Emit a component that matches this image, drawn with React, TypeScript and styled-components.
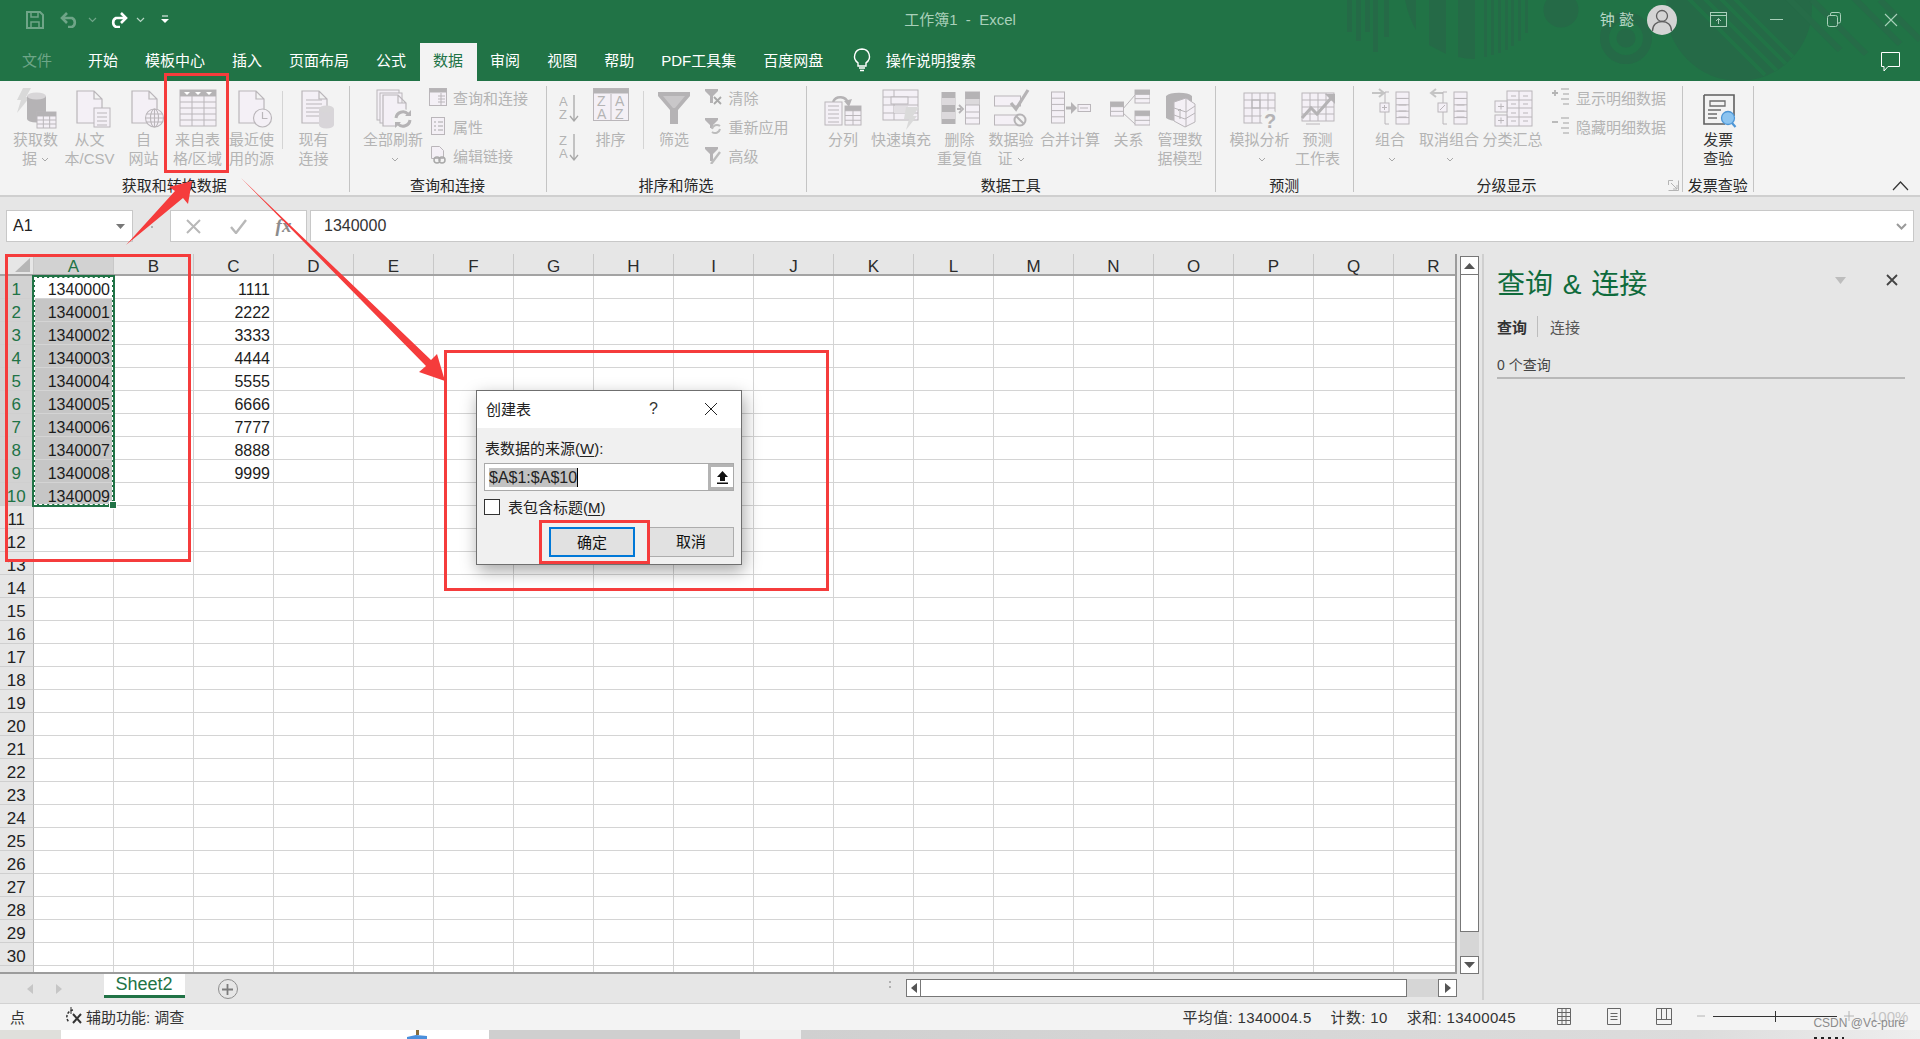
import React from "react";
import styled, { createGlobalStyle } from "styled-components";

const FONT = `"Liberation Sans", "Noto Sans CJK SC", sans-serif`;
const GREEN = "#217346";
const RED = "#f53c3c";
const STROKE = "#bab6ba";
const FILL = "#f4f0f6";
const SOLID = "#b5b3b5";

const GlobalStyle = createGlobalStyle`
  html, body { margin: 0; padding: 0; background: #e6e6e6; }
  * { box-sizing: border-box; }
`;

const Window = styled.div`
  position: relative;
  display: flex;
  flex-direction: column;
  width: 1920px;
  height: 1039px;
  overflow: hidden;
  font-family: ${FONT};
  background: #e6e6e6;
`;

/* ---------- title bar and tabs ---------- */

const Header = styled.header`
  position: relative;
  flex: none;
  height: 81px;
  background: ${GREEN};
  overflow: hidden;
`;

const Pattern = styled.svg`
  position: absolute;
  left: 0;
  top: 0;
`;

const TitleRow = styled.div`
  position: relative;
  display: grid;
  grid-template-columns: 1fr auto 1fr;
  align-items: center;
  height: 43px;
  padding-bottom: 4px;
`;

const QuickAccess = styled.div`
  display: flex;
  align-items: center;
  padding-left: 12px;
`;

const QatSlot = styled.div<{ $w: number }>`
  display: flex;
  justify-content: center;
  align-items: center;
  width: ${({ $w }) => $w}px;
  height: 26px;
`;

const DocTitle = styled.div`
  margin-top: -2px;
  font-size: 15px;
  color: #a9d0ba;
  white-space: pre;
`;

const Account = styled.div`
  display: flex;
  justify-content: flex-end;
  align-items: center;
`;

const UserName = styled.span`
  margin-top: -3px;
  font-size: 15px;
  color: #b8d8c6;
`;

const Avatar = styled.div`
  display: flex;
  justify-content: center;
  align-items: center;
  width: 30px;
  height: 30px;
  margin: 0 13px;
  border-radius: 50%;
  background: #d4d4d4;
`;

const WindowButton = styled.div`
  display: flex;
  justify-content: center;
  align-items: center;
  width: 57.5px;
  height: 30px;
`;

const TabRow = styled.nav`
  position: relative;
  display: flex;
  align-items: stretch;
  height: 38px;
  padding-left: 8.5px;
`;

const Tab = styled.div<{ $active?: boolean; $dim?: boolean }>`
  display: flex;
  align-items: center;
  padding: 0 13.5px 6px;
  margin-right: ${({ $dim }) => ($dim ? 9 : 0)}px;
  font-size: 15px;
  white-space: nowrap;
  color: ${({ $active, $dim }) => ($active ? GREEN : $dim ? "#6ea688" : "#fff")};
  background: ${({ $active }) => ($active ? "#f3f3f3" : "transparent")};
`;

const SearchHint = styled.div`
  display: flex;
  align-items: center;
  gap: 14px;
  margin-left: 15px;
  padding-bottom: 5px;
  font-size: 15px;
  color: #fff;
`;

const CommentButton = styled.div`
  display: flex;
  align-items: center;
  margin-left: auto;
  margin-right: 20px;
`;

/* ---------- ribbon ---------- */

const Ribbon = styled.section`
  display: flex;
  flex: none;
  height: 116px;
  padding: 5px 0 3px;
  background: #f3f3f3;
  border-bottom: 2px solid #cfcfcf;
`;

const Group = styled.div<{ $w: number }>`
  position: relative;
  display: flex;
  flex-direction: column;
  flex: none;
  width: ${({ $w }) => $w}px;
  border-right: 1px solid #c4c4c4;
`;

const GroupBody = styled.div<{ $pad: number }>`
  display: flex;
  align-items: flex-start;
  height: 91px;
  padding-left: ${({ $pad }) => $pad}px;
`;

const GroupLabel = styled.div<{ $pr?: number }>`
  height: 15px;
  padding-right: ${({ $pr }) => $pr ?? 0}px;
  line-height: 18px;
  text-align: center;
  font-size: 15px;
  color: #262626;
  white-space: nowrap;
`;

const LargeButton = styled.div<{ $w: number }>`
  display: flex;
  flex-direction: column;
  align-items: center;
  flex: none;
  width: ${({ $w }) => $w}px;
  padding-top: 2px;
`;

const IconSlot = styled.div`
  display: flex;
  justify-content: center;
  height: 42px;
`;

const ButtonLabel = styled.div<{ $on?: boolean }>`
  width: 100%;
  text-align: center;
  font-size: 15px;
  line-height: 19px;
  white-space: nowrap;
  color: ${({ $on }) => ($on ? "#333" : "#b4b4b4")};
`;

const ThinDivider = styled.div<{ $before: number; $after: number }>`
  flex: none;
  width: 1px;
  height: 58px;
  margin: 5px ${({ $after }) => $after}px 0 ${({ $before }) => $before}px;
  background: #d4d4d4;
`;

const SmallColumn = styled.div<{ $ml?: number }>`
  display: flex;
  flex-direction: column;
  flex: none;
  margin-top: -3.5px;
  margin-left: ${({ $ml }) => $ml ?? 0}px;
`;

const SmallItem = styled.div`
  display: flex;
  align-items: center;
  gap: 6px;
  height: 29px;
  font-size: 15px;
  white-space: nowrap;
  color: #b4b4b4;
`;

const SortColumn = styled.div`
  display: flex;
  flex-direction: column;
  align-items: center;
  flex: none;
  gap: 11px;
  width: 24px;
  padding-top: 8px;
`;

const Launcher = styled.svg`
  position: absolute;
  right: 3px;
  bottom: 1px;
`;

const CollapseButton = styled.div`
  align-self: flex-end;
  margin-left: auto;
  margin-right: 11px;
  margin-bottom: 1px;
  line-height: 0;
`;

const CaretIcon = styled.svg`
  display: inline-block;
  margin-left: 4px;
  vertical-align: 2px;
`;

const Caret = () => (
  <CaretIcon width="8" height="5" viewBox="0 0 8 5">
    <path d="M1 1l3 3 3-3" fill="none" stroke="#a8a8a8" />
  </CaretIcon>
);

/* ---------- formula bar ---------- */

const FormulaBar = styled.section`
  display: flex;
  flex: none;
  align-items: flex-start;
  height: 57px;
  padding: 13px 6px 0;
  background: #e6e6e6;
`;

const NameBox = styled.div`
  display: flex;
  justify-content: space-between;
  align-items: center;
  width: 127px;
  height: 32px;
  padding: 0 7px 0 6px;
  background: #fff;
  border: 1px solid #c8c8c8;
  font-size: 16px;
  color: #222;
`;

const GripDots = styled.div`
  display: flex;
  flex-direction: column;
  gap: 4px;
  align-items: center;
  width: 37px;
  height: 32px;
  padding-top: 10px;

  &::before,
  &::after {
    content: "";
    width: 2px;
    height: 2px;
    background: #b0b0b0;
  }
`;

const FunctionBox = styled.div`
  display: grid;
  grid-template-columns: 45px 45px 1fr;
  justify-items: center;
  align-items: center;
  width: 137px;
  height: 32px;
  background: #fff;
  border: 1px solid #c8c8c8;
`;

const FxLabel = styled.span`
  font-family: "Liberation Serif", serif;
  font-style: italic;
  font-weight: bold;
  font-size: 19px;
  color: #8c8c8c;
`;

const FormulaInput = styled.div`
  display: flex;
  justify-content: space-between;
  align-items: center;
  flex: 1;
  height: 32px;
  margin-left: 3px;
  padding: 0 6px 0 13px;
  background: #fff;
  border: 1px solid #c8c8c8;
  font-size: 16px;
  color: #333;
`;

/* ---------- sheet ---------- */

const Workspace = styled.div`
  display: flex;
  flex: none;
  height: 749px;
`;

const SheetArea = styled.div`
  display: flex;
  flex-direction: column;
  flex: none;
  width: 1482px;
`;

const SheetTop = styled.div`
  display: flex;
  height: 720px;
`;

const GridFrame = styled.div`
  position: relative;
  flex: none;
  width: 1457px;
  height: 720px;
  overflow: hidden;
  background: #fff;
  border-right: 2px solid #9c9c9c;
  border-bottom: 2px solid #9c9c9c;
`;

const HeaderRow = styled.div`
  display: flex;
  height: 22px;
  background: #e6e6e6;
  border-bottom: 2px solid #a3a3a3;
`;

const Corner = styled.div`
  position: relative;
  flex: none;
  width: 33.5px;
  border-right: 1px solid #c8c8c8;

  &::after {
    content: "";
    position: absolute;
    left: 15px;
    top: 4px;
    width: 15px;
    height: 14px;
    background: #b6b6b6;
    clip-path: polygon(100% 0, 100% 100%, 0 100%);
  }
`;

const ColHead = styled.div<{ $on?: boolean }>`
  flex: none;
  width: 80px;
  padding-left: 1px;
  text-align: center;
  font-size: 17px;
  line-height: 26px;
  color: ${({ $on }) => ($on ? GREEN : "#2b2b2b")};
  background: ${({ $on }) => ($on ? "#d2d2d2" : "transparent")};
  border-right: 1px solid #c8c8c8;
`;

const Row = styled.div`
  display: flex;
  height: 23px;
`;

const RowHead = styled.div<{ $on?: boolean }>`
  flex: none;
  width: 33.5px;
  text-align: center;
  font-size: 17px;
  line-height: 28px;
  color: ${({ $on }) => ($on ? GREEN : "#222")};
  background: ${({ $on }) => ($on ? "#d2d2d2" : "#e6e6e6")};
  border-right: 1px solid #b8b8b8;
  border-bottom: 1px solid #cfcfcf;
`;

const Cell = styled.div<{ $shade?: boolean }>`
  flex: none;
  width: 80px;
  padding-right: 2.5px;
  text-align: right;
  font-size: 16px;
  line-height: 27px;
  color: #1c1c1c;
  background: ${({ $shade }) => ($shade ? "#c6c6c6" : "#fff")};
  border-right: 1px solid #d4d4d4;
  border-bottom: 1px solid #d4d4d4;
`;

const Marquee = styled.div`
  position: absolute;
  left: 32px;
  top: 21px;
  width: 83px;
  height: 232px;
  border: 3px solid ${GREEN};

  &::before {
    content: "";
    position: absolute;
    inset: -1px;
    border: 1px dashed #fff;
  }

  &::after {
    content: "";
    position: absolute;
    right: -5px;
    bottom: -5px;
    width: 6px;
    height: 6px;
    background: ${GREEN};
    border: 1px solid #fff;
  }
`;

const ScrollGutter = styled.div`
  display: flex;
  flex-direction: column;
  flex: none;
  width: 25px;
  padding: 2px 3px 0;
`;

const ScrollButton = styled.div<{ $w?: number; $h?: number }>`
  display: flex;
  justify-content: center;
  align-items: center;
  flex: none;
  width: ${({ $w }) => ($w ? `${$w}px` : "100%")};
  height: ${({ $h }) => ($h ? `${$h}px` : "100%")};
  background: #fff;
  border: 1px solid #777;
`;

const VerticalThumb = styled.div`
  flex: none;
  height: 657px;
  background: #fff;
  border: 1px solid #777;
  border-top: 0;
`;

const VerticalTrack = styled.div`
  flex: 1;
  background: #d6d6d6;
`;

const SheetBar = styled.div`
  display: flex;
  align-items: flex-start;
  flex: none;
  height: 29px;
`;

const SheetNav = styled.div`
  display: flex;
  flex: none;
  width: 103.5px;
  height: 25px;
  padding: 10px 0 0 27px;
  gap: 23px;
`;

const SheetTab = styled.div`
  flex: none;
  width: 81px;
  height: 25.5px;
  margin-top: -2px;
  text-align: center;
  font-size: 18px;
  line-height: 24px;
  color: ${GREEN};
  background: #fff;
  border-bottom: 3px solid ${GREEN};
`;

const AddSheet = styled.div`
  display: flex;
  flex: none;
  width: 20px;
  height: 20px;
  margin: 5px 0 0 33px;
  justify-content: center;
  align-items: center;
  border: 1.5px solid #8e8e8e;
  border-radius: 50%;
`;

const SheetGrip = styled(GripDots)`
  flex: none;
  width: 4px;
  height: 18px;
  margin: 4px 14px 0 auto;
  padding-top: 3px;
  gap: 3px;
`;

const HorizontalScroll = styled.div`
  display: flex;
  flex: none;
  width: 551px;
  height: 18px;
  margin: 5px 25px 0 0;
`;

const HorizontalThumb = styled.div`
  flex: none;
  width: 486px;
  background: #fff;
  border: 1px solid #777;
  border-left: 0;
`;

const HorizontalTrack = styled.div`
  flex: 1;
  background: #d6d6d6;
`;

/* ---------- side pane ---------- */

const Pane = styled.aside`
  position: relative;
  display: flex;
  flex-direction: column;
  flex: 1;
  height: 746px;
  padding: 0 15px 0 13px;
  border-left: 2px solid #cfcfcf;
`;

const PaneHead = styled.div`
  display: flex;
  align-items: center;
  height: 55px;
`;

const PaneTitle = styled.h2`
  margin: 0;
  font-size: 28px;
  font-weight: 400;
  word-spacing: 2px;
  color: #0f6b3c;
`;

const PaneTools = styled.div`
  display: flex;
  align-items: center;
  gap: 40px;
  margin-left: auto;
  margin-right: 7px;
  margin-top: -3px;
`;

const PaneTabs = styled.div`
  display: flex;
  align-items: center;
  height: 24px;
  margin-top: 5px;
  font-size: 15px;
  color: #444;
`;

const PaneTab = styled.span<{ $on?: boolean }>`
  padding: 0 ${({ $on }) => ($on ? 10 : 12)}px 0 ${({ $on }) => ($on ? 0 : 12)}px;
  font-weight: ${({ $on }) => ($on ? 600 : 400)};
  border-right: ${({ $on }) => ($on ? "1px solid #bdbdbd" : "0")};
  color: ${({ $on }) => ($on ? "#333" : "#555")};
`;

const PaneCount = styled.div`
  margin-top: 16px;
  padding-bottom: 3px;
  font-size: 14px;
  color: #444;
  border-bottom: 2px solid #b8b8b8;
`;

/* ---------- status bar ---------- */

const StatusBar = styled.footer`
  display: flex;
  align-items: center;
  flex: none;
  height: 27px;
  padding: 0 10px 2px 0;
  font-size: 15px;
  color: #333;
  background: #f3f3f3;
  border-top: 1px solid #d2d2d2;
`;

const StatusMode = styled.span`
  width: 65px;
  padding-left: 10px;
`;

const StatusCheck = styled.div`
  display: flex;
  align-items: center;
  gap: 3px;
`;

const StatsGroup = styled.div`
  display: flex;
  gap: 19px;
  margin-left: auto;
  letter-spacing: 0.35px;
`;

const ViewButtons = styled.div`
  display: flex;
  gap: 30px;
  margin-left: 38px;
`;

const ZoomControl = styled.div`
  display: flex;
  align-items: center;
  margin-left: 23px;
  color: #b4b4b4;
`;

const ZoomTrack = styled.div`
  position: relative;
  width: 124px;
  height: 1px;
  margin: 0 7px 0 8px;
  background: #333;

  &::after {
    content: "";
    position: absolute;
    left: 62px;
    top: -5px;
    width: 1px;
    height: 11px;
    background: #333;
  }
`;

const ZoomValue = styled.span`
  margin-left: 16px;
  width: 40px;
  color: #c4c4c4;
`;

const Desktop = styled.div`
  display: flex;
  flex: none;
  height: 9px;
`;

const DesktopPart = styled.div<{ $w?: number; $bg: string }>`
  position: relative;
  flex: ${({ $w }) => ($w ? "none" : "1")};
  width: ${({ $w }) => ($w ? `${$w}px` : "auto")};
  background: ${({ $bg }) => $bg};
`;

const TrayMark = styled.div`
  position: absolute;
  right: 76px;
  bottom: 0;
  width: 30px;
  height: 2px;
  background: repeating-linear-gradient(90deg, #222 0 3px, transparent 3px 7px);
`;

const TaskIcon = styled.svg`
  position: absolute;
  left: 344px;
  top: 0;
`;

const Watermark = styled.div`
  position: absolute;
  right: 15px;
  bottom: 9px;
  font-size: 12px;
  color: #8b8b8b;
`;

/* ---------- dialog ---------- */

const Dialog = styled.div`
  position: absolute;
  left: 476px;
  top: 390px;
  display: flex;
  flex-direction: column;
  width: 266px;
  height: 175px;
  background: #f0f0f0;
  border: 1px solid #6f6f6f;
  box-shadow: 2px 6px 16px rgba(0, 0, 0, 0.35);
`;

const DialogHead = styled.div`
  display: flex;
  align-items: center;
  flex: none;
  height: 37px;
  padding: 0 0 2px 9px;
  font-size: 15px;
  color: #222;
  background: #fff;
`;

const HelpMark = styled.span`
  margin-left: auto;
  margin-right: 47px;
  font-size: 16px;
  color: #333;
`;

const CloseMark = styled.svg`
  margin-right: 24px;
`;

const DialogBody = styled.div`
  display: flex;
  flex-direction: column;
  padding: 12px 7px 0;
  font-size: 15px;
  color: #222;
`;

const FieldLabel = styled.div`
  height: 23px;
  padding-left: 1px;
  line-height: 18px;
  white-space: nowrap;
`;

const Shortcut = styled.u`
  text-underline-offset: 2px;
`;

const RangeInput = styled.div`
  display: flex;
  align-items: stretch;
  height: 28px;
  background: #fff;
  border: 1px solid #a9a9a9;
`;

const RangeText = styled.div`
  display: flex;
  align-items: center;
  flex: 1;
  padding-left: 4px;
  font-size: 16px;
  color: #222;
`;

const RangeSelected = styled.span`
  height: 19px;
  line-height: 19px;
  background: #c2c2c2;
  border-right: 1px solid #000;
`;

const RangePicker = styled.div`
  display: flex;
  justify-content: center;
  align-items: center;
  flex: none;
  width: 25px;
  background: #fff;
  border: 3px solid #b4b4b4;
  border-width: 3px 0 3px 3px;
`;

const CheckRow = styled.div`
  display: flex;
  align-items: center;
  gap: 8px;
  height: 16px;
  margin-top: 8px;
`;

const CheckBox = styled.div`
  flex: none;
  width: 16px;
  height: 16px;
  background: #fff;
  border: 1px solid #333;
`;

const CheckText = styled.span`
  margin-top: -2px;
`;

const DialogButtons = styled.div`
  display: flex;
  justify-content: flex-end;
  gap: 13px;
  margin-top: 12px;
`;

const DialogButton = styled.div<{ $primary?: boolean }>`
  width: 86px;
  height: 30px;
  text-align: center;
  line-height: 28px;
  font-size: 15px;
  color: #111;
  background: #e1e1e1;
  border: ${({ $primary }) => ($primary ? "2px solid #0078d7" : "1px solid #adadad")};
`;

/* ---------- red annotations drawn over the screenshot ---------- */

const RedBox = styled.div<{ $x: number; $y: number; $w: number; $h: number }>`
  position: absolute;
  left: ${({ $x }) => $x}px;
  top: ${({ $y }) => $y}px;
  width: ${({ $w }) => $w}px;
  height: ${({ $h }) => $h}px;
  border: 3px solid ${RED};
  pointer-events: none;
`;

const ArrowLayer = styled.svg`
  position: absolute;
  left: 0;
  top: 0;
  pointer-events: none;
`;

/* ---------- icons ---------- */

const Doc = ({ x, y, w, h }: { x: number; y: number; w: number; h: number }) => (
  <path
    d={`M${x} ${y}h${w - 8}l8 8v${h - 8}h-${w}z M${x + w - 8} ${y}v8h8`}
    fill={FILL}
    stroke={STROKE}
    strokeWidth="1.2"
  />
);

const Lines = ({ x, y, w, n, gap = 4 }: { x: number; y: number; w: number; n: number; gap?: number }) => (
  <path
    d={Array.from({ length: n }, (_, i) => `M${x} ${y + i * gap}h${w}`).join("")}
    stroke={STROKE}
    strokeWidth="1"
    fill="none"
  />
);

const Table = ({ x, y, w, h, cols, rows, head = true }: { x: number; y: number; w: number; h: number; cols: number; rows: number; head?: boolean }) => {
  const parts: string[] = [];
  for (let i = 1; i < cols; i++) parts.push(`M${x + (w * i) / cols} ${y}v${h}`);
  for (let i = 1; i < rows; i++) parts.push(`M${x} ${y + (h * i) / rows}h${w}`);
  return (
    <g>
      <rect x={x} y={y} width={w} height={h} fill={FILL} stroke={STROKE} />
      <path d={parts.join("")} stroke={STROKE} fill="none" />
      {head && <rect x={x} y={y} width={w} height={h / rows} fill={SOLID} />}
    </g>
  );
};

const Large = ({ children }: { children: React.ReactNode }) => (
  <svg width="42" height="42" viewBox="0 0 42 42">
    {children}
  </svg>
);

const Small = ({ children }: { children: React.ReactNode }) => (
  <svg width="18" height="18" viewBox="0 0 18 18" style={{ flex: "none" }}>
    {children}
  </svg>
);

const Cylinder = ({ x, y, w, h, fill }: { x: number; y: number; w: number; h: number; fill: string }) => (
  <g>
    <path d={`M${x} ${y + 3}v${h - 6}a${w / 2} 3.5 0 0 0 ${w} 0v-${h - 6}z`} fill={fill} />
    <ellipse cx={x + w / 2} cy={y + 3} rx={w / 2} ry="3.5" fill="#d8d6d8" />
  </g>
);

const GetDataIcon = () => (
  <Large>
    <path d="M8 0h8l-5 9h4L2 25l4-13H2z" fill="#d9d9d9" />
    <Cylinder x={12} y={5} w={19} h={29} fill={SOLID} />
    <rect x={22} y={24} width={19} height={16} fill="#fff" />
    <Table x={22} y={24} w={19} h={16} cols={3} rows={4} />
  </Large>
);

const FromTextIcon = () => (
  <Large>
    <Doc x={8} y={3} w={25} h={32} />
    <rect x={25} y={20} width={16} height={19} fill={FILL} stroke={STROKE} />
    <Lines x={28} y={25} w={10} n={4} />
  </Large>
);

const Globe = ({ cx, cy }: { cx: number; cy: number }) => (
  <g fill={FILL} stroke={STROKE} strokeWidth="1.1">
    <circle cx={cx} cy={cy} r="9" />
    <ellipse cx={cx} cy={cy} rx="4" ry="9" fill="none" />
    <path d={`M${cx - 9} ${cy}h18M${cx - 8} ${cy - 4}h16M${cx - 8} ${cy + 4}h16M${cx} ${cy - 9}v18`} fill="none" />
  </g>
);

const FromWebIcon = () => (
  <Large>
    <Doc x={9} y={3} w={25} h={32} />
    <Globe cx={31.5} cy={30} />
  </Large>
);

const FromTableIcon = () => (
  <Large>
    <Table x={3} y={2} w={36} h={36} cols={3} rows={6} />
    <path d="M7 4h6l-3 3zM18 4h6l-3 3zM29 4h6l-3 3z" fill="#fff" />
  </Large>
);

const RecentIcon = () => (
  <Large>
    <Doc x={8} y={3} w={25} h={32} />
    <circle cx="31.5" cy="30" r="9" fill={FILL} stroke={STROKE} strokeWidth="1.2" />
    <path d="M31.5 24v6.5h5" fill="none" stroke={STROKE} strokeWidth="1.2" />
  </Large>
);

const ExistingIcon = () => (
  <Large>
    <Doc x={9} y={3} w={25} h={32} />
    <Lines x={13} y={12} w={16} n={5} />
    <Cylinder x={26} y={18} w={15} h={22} fill="#d8d5d9" />
  </Large>
);

const RefreshRing = ({ cx, cy }: { cx: number; cy: number }) => (
  <g fill="none" stroke={SOLID} strokeWidth="3">
    <path d={`M${cx - 7} ${cy - 1}a7 7 0 0 1 12-4`} />
    <path d={`M${cx + 7} ${cy + 1}a7 7 0 0 1-12 4`} />
    <path d={`M${cx + 8} ${cy - 9}v6h-6zM${cx - 8} ${cy + 9}v-6h6z`} fill={SOLID} stroke="none" />
  </g>
);

const RefreshAllIcon = () => (
  <Large>
    <rect x="5" y="2" width="22" height="30" fill={FILL} stroke={STROKE} />
    <rect x="8" y="5" width="22" height="30" fill={FILL} stroke={STROKE} />
    <Doc x={11} y={7} w={23} h={31} />
    <circle cx="31" cy="31" r="10" fill="#f3f3f3" />
    <RefreshRing cx={31} cy={31} />
  </Large>
);

const SortIcon = ({ top, bottom }: { top: string; bottom: string }) => (
  <svg width="24" height="28" viewBox="0 0 24 28">
    <text x="0" y="12" fontFamily="Liberation Sans" fontSize="13" fill="#b4b4b4">{top}</text>
    <text x="0" y="25" fontFamily="Liberation Sans" fontSize="13" fill="#b4b4b4">{bottom}</text>
    <path d="M15 1v25M11 22l4 5 4-5" fill="none" stroke="#a8a8a8" strokeWidth="1.3" />
  </svg>
);

const SortDialogIcon = () => (
  <svg width="36" height="34" viewBox="0 0 36 34">
    <rect x="0.5" y="0.5" width="35" height="32" fill={FILL} stroke={STROKE} />
    <rect x="0.5" y="0.5" width="35" height="5" fill={SOLID} />
    <path d="M18 6v27" stroke={STROKE} />
    <g fontFamily="Liberation Sans" fontSize="14" fill="#b4b4b4">
      <text x="4" y="18">Z</text>
      <text x="4" y="31">A</text>
      <text x="22" y="18">A</text>
      <text x="22" y="31">Z</text>
    </g>
  </svg>
);

const FilterIcon = () => (
  <Large>
    <path d="M5 4h32v4L25 22v14h-8V22L5 8z" fill={SOLID} />
    <path d="M10 8h22L22 20h-2z" fill="#c9c7c9" />
  </Large>
);

const FilterClearIcon = () => (
  <Small>
    <path d="M0 1h13v2L8 8v7H5V8L0 3z" fill={SOLID} />
    <path d="M9 9l7 7M16 9l-7 7" stroke="#a9a9a9" strokeWidth="1.8" />
  </Small>
);

const FilterReapplyIcon = () => (
  <Small>
    <path d="M0 1h13v2L8 8v3H5V8L0 3z" fill={SOLID} />
    <path d="M7 12a5 5 0 0 1 8-3M15 12a5 5 0 0 1-8 3" fill="none" stroke="#bcbcbc" strokeWidth="2" />
  </Small>
);

const FilterAdvancedIcon = () => (
  <Small>
    <path d="M0 1h13v2L8 8v7H5V8L0 3z" fill={SOLID} />
    <path d="M15 6L6 18" stroke="#bcbcbc" strokeWidth="2.4" />
  </Small>
);

const QueryListIcon = () => (
  <Small>
    <rect x="0.5" y="0.5" width="17" height="17" fill={FILL} stroke={STROKE} />
    <rect x="0.5" y="0.5" width="17" height="4" fill={SOLID} />
    <path d="M9 8h7M9 11h7M9 14h7M12 5v12" stroke={STROKE} />
  </Small>
);

const PropertiesIcon = () => (
  <Small>
    <rect x="2.5" y="0.5" width="13" height="17" fill={FILL} stroke={STROKE} />
    <path d="M5 5h2M9 5h5M5 9h2M9 9h5M5 13h2M9 13h5" stroke="#a8a8a8" />
  </Small>
);

const EditLinksIcon = () => (
  <Small>
    <path d="M2.5.5h8l4 4v8h-12z" fill={FILL} stroke={STROKE} />
    <path d="M5 14a3 3 0 0 1 6 0M10 14a3 3 0 0 0 6 0M5 14a3 3 0 0 0 6 0M10 14a3 3 0 0 1 6 0" fill="none" stroke="#a9a9a9" strokeWidth="1.5" />
  </Small>
);

const TextToColumnsIcon = () => (
  <Large>
    <path d="M11 14a8 8 0 0 1 15 1" fill="none" stroke={SOLID} strokeWidth="2.4" />
    <path d="M30 11l-3 8-5-6z" fill={SOLID} />
    <rect x="3" y="14" width="17" height="23" fill={FILL} stroke={STROKE} />
    <Lines x={6} y={18} w={11} n={5} />
    <Table x={23} y={18} w={16} h={19} cols={2} rows={4} />
  </Large>
);

const FlashFillIcon = () => (
  <Large>
    <rect x="3" y="2" width="35" height="30" fill={FILL} stroke={STROKE} />
    <path d="M3 9h35M3 17h35M3 25h35M14 2v30" stroke={STROKE} />
    <rect x="11" y="9" width="17" height="7" fill={FILL} stroke={STROKE} />
    <rect x="14" y="18" width="14" height="7" fill="#e2dfe3" />
    <path d="M26 19h13l-6 9h4L26 42l3-11h-5z" fill="#dadada" />
  </Large>
);

const RemoveDupIcon = () => (
  <Large>
    <rect x="2.5" y="4" width="14" height="32" fill={SOLID} />
    <rect x="2.5" y="10" width="14" height="7" fill="#dcd9dc" />
    <rect x="2.5" y="24" width="14" height="7" fill="#dcd9dc" />
    <rect x="26.5" y="4" width="14" height="32" fill={FILL} stroke={STROKE} />
    <rect x="26.5" y="4" width="14" height="7" fill={SOLID} />
    <rect x="26.5" y="11" width="14" height="6" fill="#dcd9dc" />
    <path d="M26.5 17h14M26.5 24h14M26.5 30h14" stroke={STROKE} />
    <path d="M18 21h4M20 17l4 4-4 4" fill="none" stroke={SOLID} strokeWidth="1.8" />
  </Large>
);

const ValidateIcon = () => (
  <Large>
    <rect x="4.5" y="8" width="26" height="10" fill={FILL} stroke={STROKE} />
    <rect x="4.5" y="27" width="26" height="10" fill={FILL} stroke={STROKE} />
    <path d="M21 15l5 6L38 2" fill="none" stroke={SOLID} strokeWidth="3.2" />
    <circle cx="30" cy="32" r="5.5" fill="#f3f3f3" stroke={SOLID} strokeWidth="2" />
    <path d="M26 28l8 8" stroke={SOLID} strokeWidth="2" />
  </Large>
);

const ConsolidateIcon = () => (
  <Large>
    <Table x={2.5} y={4} w={13} h={31} cols={1} rows={5} head={false} />
    <path d="M17 20h6" stroke={SOLID} strokeWidth="3" />
    <path d="M22 14l6 6-6 6z" fill={SOLID} />
    <rect x="29" y="16.5" width="12.5" height="7" fill={FILL} stroke={STROKE} />
    <path d="M31 20h8" stroke={STROKE} />
  </Large>
);

const RelationsIcon = () => (
  <Large>
    <path d="M14 22L27 7M14 24l13 12" stroke={STROKE} fill="none" />
    <Table x={2.5} y={14} w={13} h={14} cols={1} rows={3} />
    <Table x={27} y={2} w={15} h={13} cols={1} rows={3} />
    <Table x={27} y={23} w={15} h={14} cols={1} rows={3} />
  </Large>
);

const DataModelIcon = () => (
  <Large>
    <path d="M7 8a14 5 0 0 1 26 0v22a14 5 0 0 1-26 0z" fill={SOLID} />
    <path d="M15 14l12-4 9 6v18l-10 5-11-6z" fill={FILL} stroke={STROKE} />
    <path d="M27 10v29M15 20l12 4 9-6M15 27l11 4 10-6" fill="none" stroke={STROKE} />
    <path d="M21 31v-10l-2 2M21 21l2 2" stroke={SOLID} fill="none" />
  </Large>
);

const WhatIfIcon = () => (
  <Large>
    <rect x="5" y="5" width="31" height="30" fill={FILL} stroke={STROKE} />
    <path d="M5 12h31M5 20h31M5 28h31M13 5v30M21 5v30M29 5v30" stroke={STROKE} />
    <rect x="13" y="12" width="8" height="8" fill="none" stroke={SOLID} />
    <circle cx="31" cy="31" r="9" fill="#f3f3f3" />
    <text x="25" y="40" fontFamily="Liberation Sans" fontWeight="bold" fontSize="20" fill={SOLID}>?</text>
  </Large>
);

const ForecastIcon = () => (
  <Large>
    <rect x="5" y="5" width="32" height="28" fill={FILL} stroke={STROKE} />
    <path d="M5 12h32M5 19h32M5 26h32M13 5v28M21 5v28M29 5v28" stroke={STROKE} />
    <path d="M5 30l9-10 6 6 15-17" fill="none" stroke={SOLID} strokeWidth="3" />
    <path d="M28 6h10v10z" fill={SOLID} />
    <path d="M9 36h14" stroke={STROKE} />
  </Large>
);

const OutlineColumn = () => (
  <g>
    <Table x={27} y={4} w={13} h={32} cols={1} rows={5} head={false} />
    <path d="M29.5 10.5h8M29.5 17h8M29.5 23h8M29.5 29h8" stroke={STROKE} />
    <path d="M20 4h-4v32h4" fill="none" stroke={STROKE} />
    <rect x="11" y="15" width="9" height="9" fill={FILL} stroke={STROKE} />
  </g>
);

const GroupIcon = () => (
  <Large>
    <path d="M3 5h11M10 1l5 4-5 4" fill="none" stroke="#c4c4c4" strokeWidth="2" />
    <OutlineColumn />
    <path d="M13 19.5h5M15.5 17v5" stroke={STROKE} />
  </Large>
);

const UngroupIcon = () => (
  <Large>
    <path d="M16 5H5M9 1L4 5l5 4" fill="none" stroke="#c4c4c4" strokeWidth="2" />
    <OutlineColumn />
    <path d="M13 22l5-5" stroke={STROKE} />
  </Large>
);

const SubtotalIcon = () => (
  <Large>
    <rect x="15" y="3" width="25" height="35" fill={FILL} stroke={STROKE} />
    <path d="M15 12h25M15 20h25M15 29h25M27 3v35" stroke={STROKE} />
    <path d="M19 8h5M31 8h5M19 16h5M31 16h5M19 25h5M31 25h5M19 33h5M31 33h5" stroke={STROKE} />
    <rect x="3" y="13" width="12" height="11" fill={FILL} stroke={STROKE} />
    <rect x="3" y="27" width="12" height="11" fill={FILL} stroke={STROKE} />
    <path d="M6 18.5h6M9 15.5v6M6 32.5h6M9 29.5v6" stroke={STROKE} />
  </Large>
);

const ShowDetailIcon = () => (
  <Small>
    <path d="M0 5h6M3 2v6" stroke="#b4b4b4" strokeWidth="1.8" />
    <path d="M9 1h8M11 6h6M9 11h8M11 16h6" stroke="#bdbdbd" strokeWidth="1.3" />
  </Small>
);

const HideDetailIcon = () => (
  <Small>
    <path d="M0 5h6" stroke="#b4b4b4" strokeWidth="1.8" />
    <path d="M9 1h8M11 6h6M9 11h8M11 16h6" stroke="#bdbdbd" strokeWidth="1.3" />
  </Small>
);

const InvoiceIcon = () => (
  <Large>
    <path d="M7 7h30v21M7 7v29h21" fill="none" stroke="#5f5f5f" strokeWidth="1.6" />
    <path d="M13 13h15v5H13z" fill="none" stroke="#6d6d6d" strokeWidth="1.3" />
    <path d="M11 22h13M11 26h9M11 30h9" stroke="#6d6d6d" strokeWidth="1.3" />
    <circle cx="31" cy="30" r="6.5" fill="#8cc4f0" stroke="#4d96d6" strokeWidth="1.3" />
    <path d="M35 35l3.5 4" stroke="#4d96d6" strokeWidth="2.2" />
  </Large>
);

const Chevron = ({ color }: { color: string }) => (
  <svg width="9" height="6" viewBox="0 0 9 6">
    <path d="M1 1l3.5 3.5L8 1" fill="none" stroke={color} strokeWidth="1.2" />
  </svg>
);

const TitlePattern = () => (
  <Pattern width="1920" height="81" viewBox="0 0 1920 81">
    <defs>
      <clipPath id="bigDisc">
        <circle cx="1739" cy="8" r="73" />
      </clipPath>
    </defs>
    <g fill="#256a47">
      <rect x="1347" y="0" width="5" height="32" />
      <rect x="1356" y="0" width="5" height="41" />
      <rect x="1365" y="0" width="5" height="32" />
      <rect x="1373" y="0" width="5" height="52" />
      <rect x="1384" y="0" width="5" height="37" />
      <path d="M1405 0h11v30q-7-12-11-30z" />
      <path d="M1429 0h17v54l-17-9z" />
      <path d="M1458 0h17v59q-9 0-17-2z" />
      <rect x="1484" y="0" width="3" height="57" />
      <rect x="1491" y="0" width="3" height="55" />
      <rect x="1498" y="0" width="3" height="53" />
      <rect x="1505" y="0" width="3" height="50" />
      <rect x="1511" y="0" width="3" height="46" />
      <rect x="1518" y="0" width="3" height="41" />
      <rect x="1525" y="0" width="3" height="33" />
      <circle cx="1561" cy="10" r="17.5" />
      <circle cx="1626" cy="38" r="9.5" />
      <circle cx="1626" cy="38" r="21.5" fill="none" stroke="#256a47" strokeWidth="9" />
      <circle cx="1739" cy="8" r="73" />
    </g>
    <g clipPath="url(#bigDisc)" stroke={GREEN} strokeWidth="4" fill="none">
      <path d="M1680 -10l85 85M1692 -14l85 85M1704 -18l85 85M1716 -20l80 80" />
    </g>
    <path d="M1780 -10l60 60M1812 0l54 54M1850 -6l50 50M1880 0l40 40" stroke="#266c48" strokeWidth="6" fill="none" />
  </Pattern>
);

/* ---------- data ---------- */

const COLUMNS = "ABCDEFGHIJKLMNOPQR".split("");
const ROW_NUMBERS = Array.from({ length: 31 }, (_, i) => i + 1);
const COL_C = ["1111", "2222", "3333", "4444", "5555", "6666", "7777", "8888", "9999"];
const tabs = ["开始", "模板中心", "插入", "页面布局", "公式"];
const tabsAfter = ["审阅", "视图", "帮助", "PDF工具集", "百度网盘"];

const cellText = (row: number, col: number) => {
  if (col === 0 && row <= 10) return String(1340000 + row - 1);
  if (col === 2 && row <= 9) return COL_C[row - 1];
  return "";
};

export default function App() {
  return (
    <Window>
      <GlobalStyle />

      <Header>
        <TitlePattern />
        <TitleRow>
          <QuickAccess>
            <QatSlot $w={46}>
              <svg width="18" height="18" viewBox="0 0 18 18">
                <path d="M1 1h13l3 3v13H1z" fill="none" stroke="#6fa588" strokeWidth="2" />
                <path d="M5 1v5h7V1M5 17v-6h8v6" fill="none" stroke="#6fa588" strokeWidth="1.5" />
              </svg>
            </QatSlot>
            <QatSlot $w={23}>
              <svg width="20" height="17" viewBox="0 0 20 17">
                <path d="M3 7h9a5 5 0 0 1 0 9H8" fill="none" stroke="#6fa588" strokeWidth="2.6" />
                <path d="M7 2L2 7l5 5" fill="none" stroke="#6fa588" strokeWidth="2.6" />
              </svg>
            </QatSlot>
            <QatSlot $w={22}>
              <Chevron color="#6fa588" />
            </QatSlot>
            <QatSlot $w={29}>
              <svg width="20" height="17" viewBox="0 0 20 17">
                <path d="M17 7H8a5 5 0 0 0 0 9h4" fill="none" stroke="#fff" strokeWidth="2.6" />
                <path d="M13 2l5 5-5 5" fill="none" stroke="#fff" strokeWidth="2.6" />
              </svg>
            </QatSlot>
            <QatSlot $w={16}>
              <Chevron color="#b6d6c4" />
            </QatSlot>
            <QatSlot $w={34}>
              <svg width="8" height="9" viewBox="0 0 8 9">
                <path d="M1 1h6" stroke="#fff" />
                <path d="M0 4h8L4 8z" fill="#fff" />
              </svg>
            </QatSlot>
          </QuickAccess>
          <DocTitle>工作簿1  -  Excel</DocTitle>
          <Account>
            <UserName>钟 懿</UserName>
            <Avatar>
              <svg width="24" height="24" viewBox="0 0 24 24">
                <circle cx="12" cy="8" r="5.5" fill="none" stroke="#5f5f5f" strokeWidth="1.3" />
                <path d="M2.5 23c0-6 4-9.5 9.5-9.5s9.5 3.5 9.5 9.5" fill="none" stroke="#5f5f5f" strokeWidth="1.3" />
              </svg>
            </Avatar>
            <WindowButton>
              <svg width="17" height="15" viewBox="0 0 17 15">
                <rect x="0.5" y="0.5" width="16" height="14" fill="none" stroke="#a9d0ba" />
                <path d="M1 3.5h15" stroke="#a9d0ba" />
                <path d="M8.5 12V6.5M6 9l2.5-2.5L11 9" fill="none" stroke="#a9d0ba" />
              </svg>
            </WindowButton>
            <WindowButton>
              <svg width="13" height="3" viewBox="0 0 13 3">
                <path d="M0 1.5h13" stroke="#a9d0ba" />
              </svg>
            </WindowButton>
            <WindowButton>
              <svg width="14" height="15" viewBox="0 0 14 15">
                <rect x="0.5" y="3.5" width="10" height="11" rx="2" fill="none" stroke="#a9d0ba" />
                <path d="M3.5 3V2a1.5 1.5 0 0 1 1.5-1.5h6A2 2 0 0 1 13.5 2.500v7A1.500 1.500 0 0 1 12 11h-1" fill="none" stroke="#a9d0ba" />
              </svg>
            </WindowButton>
            <WindowButton>
              <svg width="14" height="14" viewBox="0 0 14 14">
                <path d="M1 1l12 12M13 1L1 13" stroke="#a9d0ba" strokeWidth="1.1" />
              </svg>
            </WindowButton>
          </Account>
        </TitleRow>
        <TabRow>
          <Tab $dim>文件</Tab>
          {tabs.map((t) => (
            <Tab key={t}>{t}</Tab>
          ))}
          <Tab $active>数据</Tab>
          {tabsAfter.map((t) => (
            <Tab key={t}>{t}</Tab>
          ))}
          <SearchHint>
            <svg width="20" height="24" viewBox="0 0 20 24">
              <path d="M10 1a7.500 7.500 0 0 0-4 13.800V18h8v-3.200A7.500 7.500 0 0 0 10 1z" fill="none" stroke="#fff" strokeWidth="1.4" />
              <path d="M7 20h6M8 22.500h4" stroke="#fff" strokeWidth="1.5" />
            </svg>
            操作说明搜索
          </SearchHint>
          <CommentButton>
            <svg width="19" height="20" viewBox="0 0 19 20">
              <path d="M.5.5h18v14H7l-4 4.500V14.500H.5z" fill="none" stroke="#fff" />
            </svg>
          </CommentButton>
        </TabRow>
      </Header>

      <Ribbon>
        <Group $w={349.5}>
          <GroupBody $pad={8.5}>
            <LargeButton $w={54}>
              <IconSlot><GetDataIcon /></IconSlot>
              <ButtonLabel>获取数<br />据<Caret /></ButtonLabel>
            </LargeButton>
            <LargeButton $w={54}>
              <IconSlot><FromTextIcon /></IconSlot>
              <ButtonLabel>从文<br />本/CSV</ButtonLabel>
            </LargeButton>
            <LargeButton $w={54}>
              <IconSlot><FromWebIcon /></IconSlot>
              <ButtonLabel>自<br />网站</ButtonLabel>
            </LargeButton>
            <LargeButton $w={54}>
              <IconSlot><FromTableIcon /></IconSlot>
              <ButtonLabel>来自表<br />格/区域</ButtonLabel>
            </LargeButton>
            <LargeButton $w={54}>
              <IconSlot><RecentIcon /></IconSlot>
              <ButtonLabel>最近使<br />用的源</ButtonLabel>
            </LargeButton>
            <ThinDivider $before={3.5} $after={3.5} />
            <LargeButton $w={54}>
              <IconSlot><ExistingIcon /></IconSlot>
              <ButtonLabel>现有<br />连接</ButtonLabel>
            </LargeButton>
          </GroupBody>
          <GroupLabel>获取和转换数据</GroupLabel>
        </Group>

        <Group $w={197}>
          <GroupBody $pad={7.5}>
            <LargeButton $w={72}>
              <IconSlot><RefreshAllIcon /></IconSlot>
              <ButtonLabel>全部刷新<br /><Caret /></ButtonLabel>
            </LargeButton>
            <SmallColumn>
              <SmallItem><QueryListIcon />查询和连接</SmallItem>
              <SmallItem><PropertiesIcon />属性</SmallItem>
              <SmallItem><EditLinksIcon />编辑链接</SmallItem>
            </SmallColumn>
          </GroupBody>
          <GroupLabel>查询和连接</GroupLabel>
        </Group>

        <Group $w={260}>
          <GroupBody $pad={12.5}>
            <SortColumn>
              <SortIcon top="A" bottom="Z" />
              <SortIcon top="Z" bottom="A" />
            </SortColumn>
            <LargeButton $w={55}>
              <IconSlot><SortDialogIcon /></IconSlot>
              <ButtonLabel>排序</ButtonLabel>
            </LargeButton>
            <ThinDivider $before={4.5} $after={0} />
            <LargeButton $w={61}>
              <IconSlot><FilterIcon /></IconSlot>
              <ButtonLabel>筛选</ButtonLabel>
            </LargeButton>
            <SmallColumn>
              <SmallItem><FilterClearIcon />清除</SmallItem>
              <SmallItem><FilterReapplyIcon />重新应用</SmallItem>
              <SmallItem><FilterAdvancedIcon />高级</SmallItem>
            </SmallColumn>
          </GroupBody>
          <GroupLabel>排序和筛选</GroupLabel>
        </Group>

        <Group $w={409.5}>
          <GroupBody $pad={8.5}>
            <LargeButton $w={56}>
              <IconSlot><TextToColumnsIcon /></IconSlot>
              <ButtonLabel>分列</ButtonLabel>
            </LargeButton>
            <LargeButton $w={60}>
              <IconSlot><FlashFillIcon /></IconSlot>
              <ButtonLabel>快速填充</ButtonLabel>
            </LargeButton>
            <LargeButton $w={57}>
              <IconSlot><RemoveDupIcon /></IconSlot>
              <ButtonLabel>删除<br />重复值</ButtonLabel>
            </LargeButton>
            <LargeButton $w={46}>
              <IconSlot><ValidateIcon /></IconSlot>
              <ButtonLabel>数据验<br />证<Caret /></ButtonLabel>
            </LargeButton>
            <LargeButton $w={72}>
              <IconSlot><ConsolidateIcon /></IconSlot>
              <ButtonLabel>合并计算</ButtonLabel>
            </LargeButton>
            <LargeButton $w={45}>
              <IconSlot><RelationsIcon /></IconSlot>
              <ButtonLabel>关系</ButtonLabel>
            </LargeButton>
            <LargeButton $w={58}>
              <IconSlot><DataModelIcon /></IconSlot>
              <ButtonLabel>管理数<br />据模型</ButtonLabel>
            </LargeButton>
          </GroupBody>
          <GroupLabel>数据工具</GroupLabel>
        </Group>

        <Group $w={137.5}>
          <GroupBody $pad={8}>
            <LargeButton $w={71}>
              <IconSlot><WhatIfIcon /></IconSlot>
              <ButtonLabel>模拟分析<br /><Caret /></ButtonLabel>
            </LargeButton>
            <LargeButton $w={45}>
              <IconSlot><ForecastIcon /></IconSlot>
              <ButtonLabel>预测<br />工作表</ButtonLabel>
            </LargeButton>
          </GroupBody>
          <GroupLabel>预测</GroupLabel>
        </Group>

        <Group $w={329}>
          <GroupBody $pad={7.5}>
            <LargeButton $w={58}>
              <IconSlot><GroupIcon /></IconSlot>
              <ButtonLabel>组合<br /><Caret /></ButtonLabel>
            </LargeButton>
            <LargeButton $w={58}>
              <IconSlot><UngroupIcon /></IconSlot>
              <ButtonLabel>取消组合<br /><Caret /></ButtonLabel>
            </LargeButton>
            <LargeButton $w={71}>
              <IconSlot><SubtotalIcon /></IconSlot>
              <ButtonLabel>分类汇总</ButtonLabel>
            </LargeButton>
            <SmallColumn $ml={4}>
              <SmallItem><ShowDetailIcon />显示明细数据</SmallItem>
              <SmallItem><HideDetailIcon />隐藏明细数据</SmallItem>
            </SmallColumn>
          </GroupBody>
          <GroupLabel $pr={22}>分级显示</GroupLabel>
          <Launcher width="11" height="11" viewBox="0 0 11 11">
            <path d="M.5 5V.5H5M3 3l6 6M5 9h4V5M.5 10.500h10V.5" fill="none" stroke="#b4b4b4" />
          </Launcher>
        </Group>

        <Group $w={71.5}>
          <GroupBody $pad={0}>
            <LargeButton $w={71.5}>
              <IconSlot><InvoiceIcon /></IconSlot>
              <ButtonLabel $on>发票<br />查验</ButtonLabel>
            </LargeButton>
          </GroupBody>
          <GroupLabel>发票查验</GroupLabel>
        </Group>

        <CollapseButton>
          <svg width="17" height="10" viewBox="0 0 17 10">
            <path d="M1 9l7.500-8L16 9" fill="none" stroke="#333" strokeWidth="1.2" />
          </svg>
        </CollapseButton>
      </Ribbon>

      <FormulaBar>
        <NameBox>
          A1
          <svg width="9" height="5" viewBox="0 0 9 5">
            <path d="M0 0h9L4.500 5z" fill="#777" />
          </svg>
        </NameBox>
        <GripDots />
        <FunctionBox>
          <svg width="15" height="15" viewBox="0 0 15 15">
            <path d="M1 1l13 13M14 1L1 14" stroke="#b8b8b8" strokeWidth="2" />
          </svg>
          <svg width="17" height="15" viewBox="0 0 17 15">
            <path d="M1 8l5 6L16 1" fill="none" stroke="#b8b8b8" strokeWidth="2.4" />
          </svg>
          <FxLabel>fx</FxLabel>
        </FunctionBox>
        <FormulaInput>
          1340000
          <svg width="11" height="7" viewBox="0 0 11 7">
            <path d="M1 1l4.500 4.500L10 1" fill="none" stroke="#9a9a9a" strokeWidth="2" />
          </svg>
        </FormulaInput>
      </FormulaBar>

      <Workspace>
        <SheetArea>
          <SheetTop>
            <GridFrame>
              <HeaderRow>
                <Corner />
                {COLUMNS.map((c, i) => (
                  <ColHead key={c} $on={i === 0}>
                    {c}
                  </ColHead>
                ))}
              </HeaderRow>
              {ROW_NUMBERS.map((r) => (
                <Row key={r}>
                  <RowHead $on={r <= 10}>{r}</RowHead>
                  {COLUMNS.map((c, i) => (
                    <Cell key={c} $shade={i === 0 && r >= 2 && r <= 10}>
                      {cellText(r, i)}
                    </Cell>
                  ))}
                </Row>
              ))}
              <Marquee />
            </GridFrame>
            <ScrollGutter>
              <ScrollButton $h={19}>
                <svg width="11" height="6" viewBox="0 0 11 6">
                  <path d="M0 6h11L5.500 0z" fill="#555" />
                </svg>
              </ScrollButton>
              <VerticalThumb />
              <VerticalTrack />
              <ScrollButton $h={18}>
                <svg width="11" height="6" viewBox="0 0 11 6">
                  <path d="M0 0h11L5.500 6z" fill="#555" />
                </svg>
              </ScrollButton>
            </ScrollGutter>
          </SheetTop>
          <SheetBar>
            <SheetNav>
              <svg width="6" height="10" viewBox="0 0 6 10">
                <path d="M6 0v10L0 5z" fill="#c6c6c6" />
              </svg>
              <svg width="6" height="10" viewBox="0 0 6 10">
                <path d="M0 0v10l6-5z" fill="#c6c6c6" />
              </svg>
            </SheetNav>
            <SheetTab>Sheet2</SheetTab>
            <AddSheet>
              <svg width="11" height="11" viewBox="0 0 11 11">
                <path d="M5.500 0v11M0 5.500h11" stroke="#7c7c7c" strokeWidth="1.8" />
              </svg>
            </AddSheet>
            <SheetGrip />
            <HorizontalScroll>
              <ScrollButton $w={15}>
                <svg width="6" height="10" viewBox="0 0 6 10">
                  <path d="M6 0v10L0 5z" fill="#555" />
                </svg>
              </ScrollButton>
              <HorizontalThumb />
              <HorizontalTrack />
              <ScrollButton $w={19}>
                <svg width="6" height="10" viewBox="0 0 6 10">
                  <path d="M0 0v10l6-5z" fill="#555" />
                </svg>
              </ScrollButton>
            </HorizontalScroll>
          </SheetBar>
        </SheetArea>

        <Pane>
          <PaneHead>
            <PaneTitle>查询 &amp; 连接</PaneTitle>
            <PaneTools>
              <svg width="11" height="7" viewBox="0 0 11 7">
                <path d="M0 0h11L5.500 7z" fill="#bdbdbd" />
              </svg>
              <svg width="12" height="12" viewBox="0 0 12 12">
                <path d="M1 1l10 10M11 1L1 11" stroke="#444" strokeWidth="1.8" />
              </svg>
            </PaneTools>
          </PaneHead>
          <PaneTabs>
            <PaneTab $on>查询</PaneTab>
            <PaneTab>连接</PaneTab>
          </PaneTabs>
          <PaneCount>0 个查询</PaneCount>
        </Pane>
      </Workspace>

      <StatusBar>
        <StatusMode>点</StatusMode>
        <StatusCheck>
          <svg width="18" height="18" viewBox="0 0 18 18">
            <path d="M8 3a7 7 0 0 0-4 12" fill="none" stroke="#333" strokeWidth="1.5" strokeDasharray="2.500 1.500" />
            <path d="M6 0v7" stroke="#333" />
            <path d="M8 7l8 9M16 7l-8 9" stroke="#333" strokeWidth="2" />
          </svg>
          辅助功能: 调查
        </StatusCheck>
        <StatsGroup>
          <span>平均值: 1340004.5</span>
          <span>计数: 10</span>
          <span>求和: 13400045</span>
        </StatsGroup>
        <ViewButtons>
          <svg width="20" height="17" viewBox="0 0 20 17">
            <path d="M3.500.5h13v16h-13zM3.500 4.500h13M3.500 8.500h13M3.500 12.500h13M8 .5v16M12 .5v16" fill="none" stroke="#666" />
          </svg>
          <svg width="20" height="17" viewBox="0 0 20 17">
            <path d="M3.500.5h13v16h-13zM6.500 5.500h7M6.500 8.500h7M6.500 11.500h7" fill="none" stroke="#666" />
          </svg>
          <svg width="20" height="17" viewBox="0 0 20 17">
            <path d="M2.500.5h15v16h-15zM2.500 11.500h15M7.500 .5v11M12.500 .5v11" fill="none" stroke="#666" />
          </svg>
        </ViewButtons>
        <ZoomControl>
          <svg width="8" height="2" viewBox="0 0 8 2">
            <path d="M0 1h8" stroke="#b4b4b4" />
          </svg>
          <ZoomTrack />
          <svg width="10" height="10" viewBox="0 0 10 10">
            <path d="M0 5h10M5 0v10" stroke="#b4b4b4" />
          </svg>
          <ZoomValue>100%</ZoomValue>
        </ZoomControl>
      </StatusBar>

      <Desktop>
        <DesktopPart $w={61} $bg="#dfdfdb" />
        <DesktopPart $w={428} $bg="#fff">
          <TaskIcon width="24" height="9" viewBox="0 0 24 9">
            <rect x="11" y="0" width="3" height="5" fill="#8a6d3b" />
            <path d="M2 7l9-2 11 1v3H2z" fill="#4a8fdc" />
          </TaskIcon>
        </DesktopPart>
        <DesktopPart $w={251} $bg="#cfcfcf" />
        <DesktopPart $w={61} $bg="#f0f0f0" />
        <DesktopPart $bg="linear-gradient(90deg, #d0d0d0 0, #dcdcdc 80%, #eeeeee 100%)">
          <TrayMark />
        </DesktopPart>
      </Desktop>

      <Dialog>
        <DialogHead>
          创建表
          <HelpMark>?</HelpMark>
          <CloseMark width="12" height="12" viewBox="0 0 12 12">
            <path d="M0 0l12 12M12 0L0 12" stroke="#222" />
          </CloseMark>
        </DialogHead>
        <DialogBody>
          <FieldLabel>表数据的来源(<Shortcut>W</Shortcut>):</FieldLabel>
          <RangeInput>
            <RangeText>
              <RangeSelected>$A$1:$A$10</RangeSelected>
            </RangeText>
            <RangePicker>
              <svg width="11" height="13" viewBox="0 0 11 13">
                <path d="M5.500 0L11 6H8v4H3V6H0zM0 11.500h11V13H0z" fill="#111" />
              </svg>
            </RangePicker>
          </RangeInput>
          <CheckRow>
            <CheckBox />
            <CheckText>表包含标题(<Shortcut>M</Shortcut>)</CheckText>
          </CheckRow>
          <DialogButtons>
            <DialogButton $primary>确定</DialogButton>
            <DialogButton>取消</DialogButton>
          </DialogButtons>
        </DialogBody>
      </Dialog>

      <RedBox $x={164} $y={73} $w={65} $h={100} />
      <RedBox $x={5} $y={254} $w={186} $h={308} />
      <RedBox $x={444} $y={350} $w={385} $h={241} />
      <RedBox $x={539} $y={520} $w={111} $h={44} />
      <ArrowLayer width="1920" height="1039" viewBox="0 0 1920 1039">
        <path d="M126 245L175 191L169 187L192 181L188 204L183 198Z" fill={RED} />
        <path d="M241 178L431 360L437 354L445 381L419 372L426 366Z" fill={RED} />
      </ArrowLayer>

      <Watermark>CSDN @Vc-pure</Watermark>
    </Window>
  );
}
